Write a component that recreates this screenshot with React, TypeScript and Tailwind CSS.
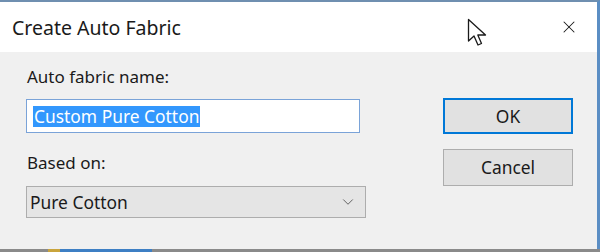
import { ChevronDown, X } from "lucide-react";

const font = { fontFamily: '"Noto Sans", "Open Sans", sans-serif' };

function Cursor() {
  return (
    <svg width="22" height="30" viewBox="0 0 22 30" className="mt-[16px]">
      <path
        d="M1.5 1.5 L1.5 23 L7 18 L11 27 L14.5 25.5 L10.8 17 L18.5 17 Z"
        fill="#ffffff"
        stroke="#1a1a1a"
        strokeWidth="1.3"
        strokeLinejoin="round"
      />
    </svg>
  );
}

export default function App() {
  return (
    <div
      className="w-[600px] h-[252px] overflow-hidden bg-[#f0f0f0] flex flex-col text-[#1a1a1a]"
      style={font}
    >
      {/* title bar */}
      <div className="h-[52px] bg-white border-t-2 border-[#6f8fb0] border-r-[3px] border-r-[#5b8ec4] flex items-start">
        <div className="pl-[12px] pt-[14px] text-[19.5px] leading-[24px] flex-1">Create Auto Fabric</div>
        <div className="w-[22px] mr-[70px]">
          <Cursor />
        </div>
        <X className="mt-[15px] mr-[18px]" size={20} strokeWidth={1.25} />
      </div>

      {/* body */}
      <div className="flex-1 flex border-r-[3px] border-r-[#5b8ec4]">
        <div className="pl-[26px] pt-[14px] w-[420px]">
          <div className="text-[17px] leading-[22px] pl-px">Auto fabric name:</div>
          <div className="mt-[11px] w-[334px] h-[34px] bg-white border border-[#7aa3d8] flex items-center pl-[6px]">
            <span className="bg-[#3297fd] text-white text-[17.4px] leading-[21px] px-px">Custom Pure Cotton</span>
          </div>
          <div className="mt-[19px] text-[17px] leading-[22px] pl-px">Based on:</div>
          <div className="mt-[12px] w-[340px] h-[32px] bg-[#e5e5e5] border border-[#adadad] flex items-center justify-between pl-[3px] pr-[8px]">
            <span className="text-[17.4px] leading-[22px]">Pure Cotton</span>
            <ChevronDown size={18} strokeWidth={1.2} color="#555" />
          </div>
        </div>
        <div className="flex flex-col pt-[46px] pl-[23px] gap-[15px]">
          <button className="w-[130px] h-[36px] bg-[#e1e1e1] border-2 border-[#0078d7] text-[17.4px]">OK</button>
          <button className="w-[130px] h-[37px] bg-[#e1e1e1] border border-[#adadad] text-[17.4px]">Cancel</button>
        </div>
      </div>

      {/* taskbar bit below */}
      <div className="h-[3px] flex bg-[#8a8a8a]">
        <div className="w-[48px]" />
        <div className="w-[12px] bg-[#c9a43c]" />
        <div className="w-[92px] bg-[#3d7fc4]" />
      </div>
    </div>
  );
}
